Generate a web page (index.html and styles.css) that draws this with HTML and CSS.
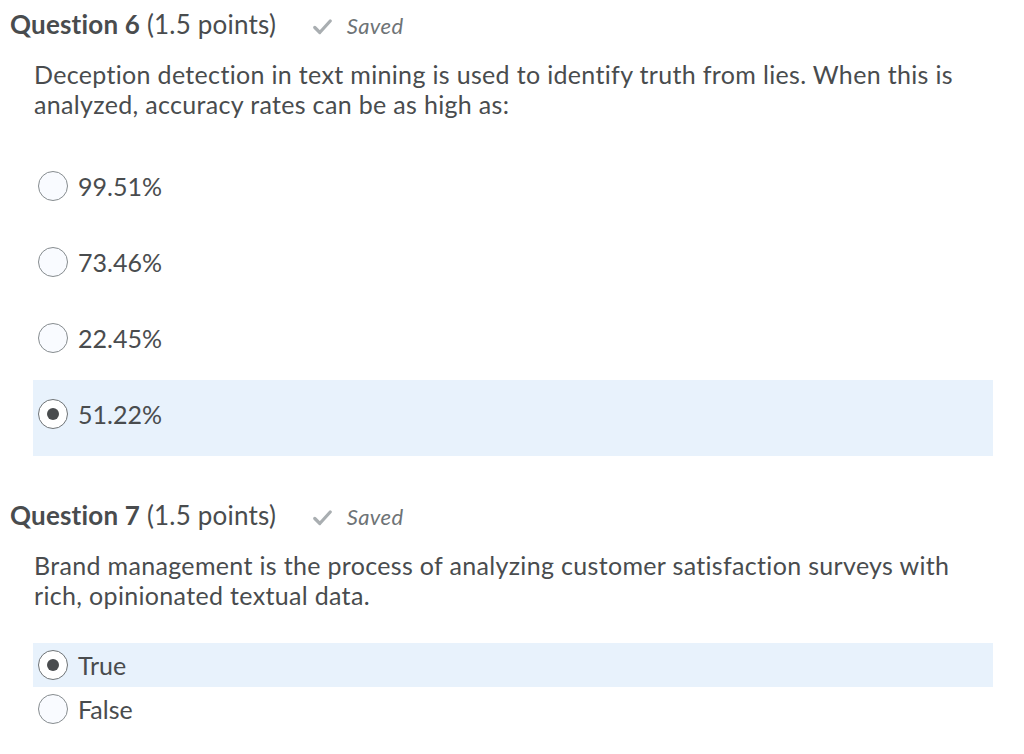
FILE: index.html
```html
<!DOCTYPE html>
<html lang="en">
<head>
    <meta charset="UTF-8">
    <title>Quiz</title>
    <link rel="stylesheet" href="styles.css">
</head>
<body>

<div class="question">
    <div class="q-header">
        <h2><strong>Question 6</strong> (1.5 points)</h2>
        <span class="saved">
            <svg class="check" width="19" height="16" viewBox="0 0 19 16"><path d="M1.8 8.5 L6.8 13.5 L17.2 2" fill="none" stroke="#a9aeb1" stroke-width="3.2" stroke-linecap="round" stroke-linejoin="round"/></svg>
            Saved
        </span>
    </div>
    <p class="q-text">Deception detection in text mining is used to identify truth from lies. When this is analyzed, accuracy rates can be as high as:</p>
    <div class="options">
        <label class="option tall"><span class="radio"></span>99.51%</label>
        <label class="option tall"><span class="radio"></span>73.46%</label>
        <label class="option tall"><span class="radio"></span>22.45%</label>
        <label class="option tall selected"><span class="radio"></span>51.22%</label>
    </div>
</div>

<div class="question">
    <div class="q-header">
        <h2><strong>Question 7</strong> (1.5 points)</h2>
        <span class="saved">
            <svg class="check" width="19" height="16" viewBox="0 0 19 16"><path d="M1.8 8.5 L6.8 13.5 L17.2 2" fill="none" stroke="#a9aeb1" stroke-width="3.2" stroke-linecap="round" stroke-linejoin="round"/></svg>
            Saved
        </span>
    </div>
    <p class="q-text">Brand management is the process of analyzing customer satisfaction surveys with rich, opinionated textual data.</p>
    <div class="options">
        <label class="option selected"><span class="radio"></span>True</label>
        <label class="option"><span class="radio"></span>False</label>
    </div>
</div>

</body>
</html>
```

FILE: styles.css
```css
body {
    margin: 0;
    padding: 0 31px 0 10px;
    font-family: Lato, "Open Sans", sans-serif;
    color: #494c4e;
    background: #fff;
}

.question {
    margin-bottom: 35px;
}

.q-header {
    display: flex;
    align-items: baseline;
    gap: 37px;
    padding-top: 8px;
}

.q-header h2 {
    margin: 0;
    font-size: 26px;
    font-weight: normal;
    letter-spacing: 0.2px;
    line-height: 32px;
}

.q-header strong {
    font-weight: bold;
}

.saved {
    font-size: 22px;
    font-style: italic;
    letter-spacing: 0.4px;
    color: #6e7376;
}

.check {
    margin-right: 9px;
    vertical-align: -1px;
}

.q-text {
    margin: 19px 0 0 24px;
    font-size: 25px;
    letter-spacing: 0.33px;
    line-height: 30px;
}

.options {
    margin: 33px 0 0 23px;
}

.option {
    display: flex;
    align-items: center;
    gap: 10px;
    font-size: 25px;
    height: 44px;
    padding-left: 5px;
}

.option.tall {
    height: 76px;
    align-items: flex-start;
    padding-top: 19px;
    box-sizing: border-box;
}

.option.selected {
    background: #e8f2fc;
}

.radio {
    width: 28px;
    height: 28px;
    flex: none;
    border: 1px solid #868c8f;
    border-radius: 50%;
    background: #f9fbff;
    display: flex;
    align-items: center;
    justify-content: center;
}

.selected .radio {
    background: #fff;
    border-color: #6e7376;
}

.selected .radio::after {
    content: "";
    width: 12px;
    height: 12px;
    border-radius: 50%;
    background: #494c4e;
}
```
